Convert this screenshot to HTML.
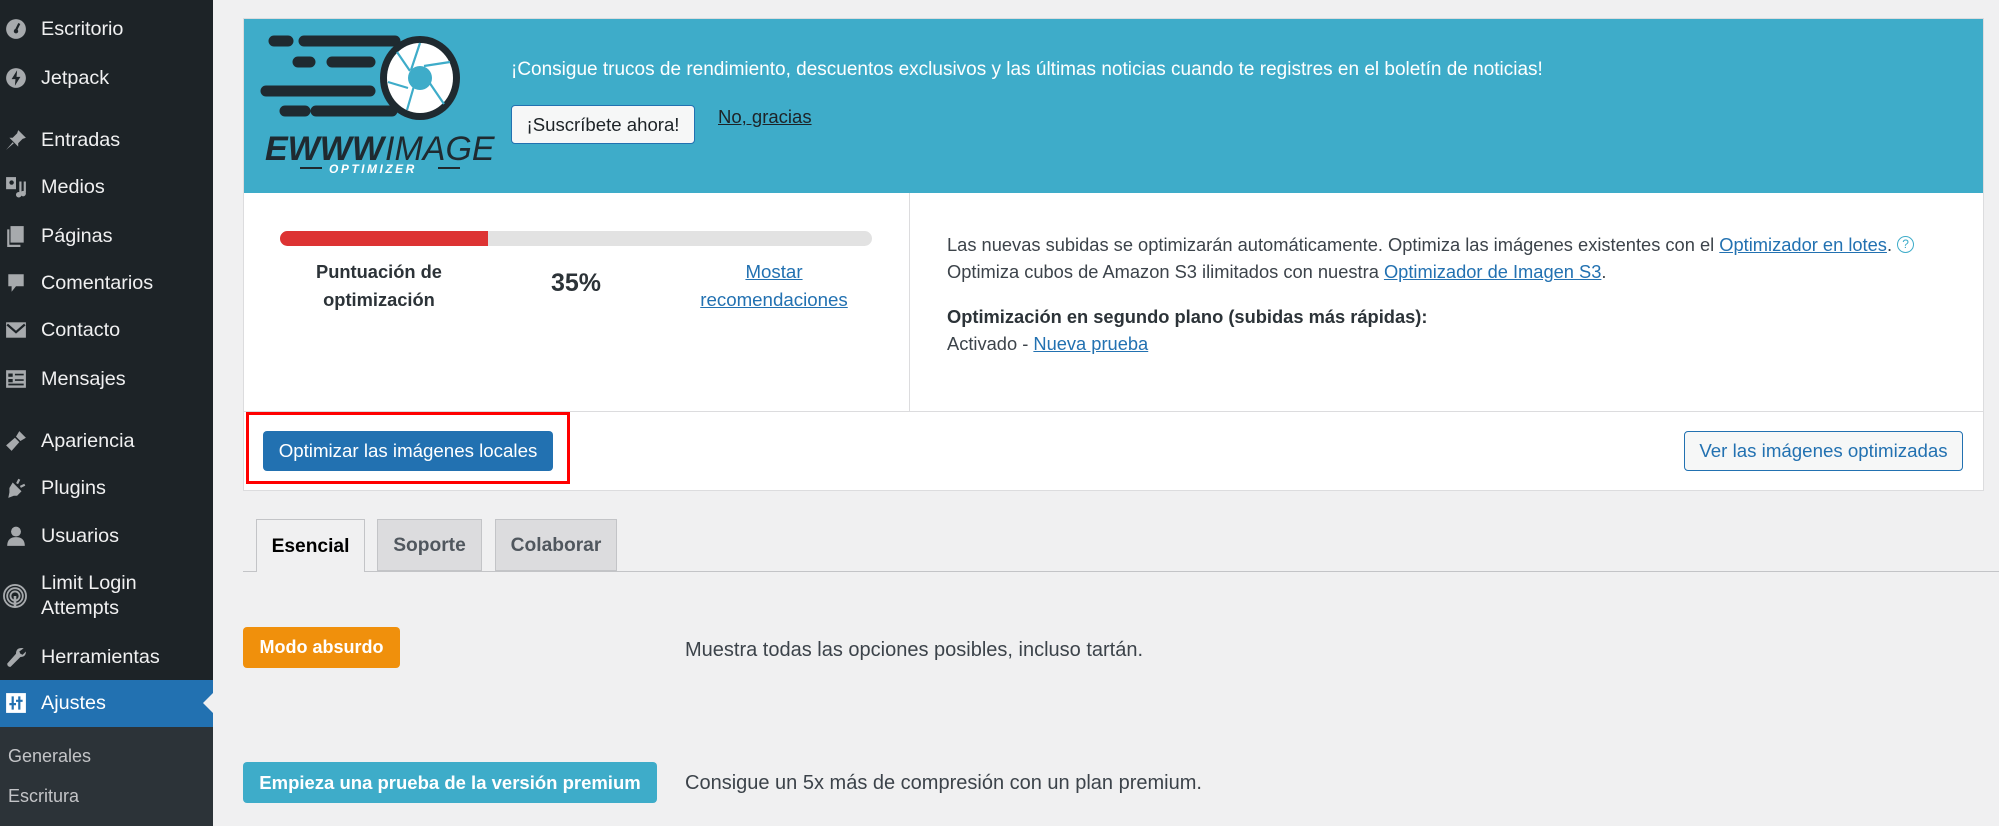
<!DOCTYPE html>
<html><head><meta charset="utf-8"><style>
*{box-sizing:border-box;margin:0;padding:0}
body{width:1999px;height:826px;overflow:hidden;background:#f0f0f1;font-family:"Liberation Sans",sans-serif;color:#3c434a;position:relative}
.a{position:absolute;white-space:nowrap}
#side{position:absolute;left:0;top:0;width:213px;height:826px;background:#1d2327}
.mi{position:absolute;left:41px;color:#f0f0f1;font-size:19.8px;line-height:22px}
.ic{position:absolute;left:5px;width:22px;height:22px}
.sub{position:absolute;left:8px;color:#c3c4c7;font-size:18px}
a{color:#2271b1;text-decoration:underline}
.btn{position:absolute;border-radius:4px;font-size:18.7px;text-align:center;white-space:nowrap}
</style></head><body>
<div id="side">
  <svg class="ic" style="top:18px" viewBox="0 0 20 20"><circle cx="10" cy="10" r="9" fill="#a7aaad"/><path d="M10 11 L13 5" stroke="#1d2327" stroke-width="2"/><circle cx="10" cy="12" r="2" fill="#1d2327"/></svg>
  <div class="mi" style="top:18px">Escritorio</div>
  <svg class="ic" style="top:67px" viewBox="0 0 20 20"><circle cx="10" cy="10" r="9" fill="#a7aaad"/><path d="M11 3 L6 11 H9.5 L9 17 L14 9 H10.5 Z" fill="#1d2327"/></svg>
  <div class="mi" style="top:67px">Jetpack</div>
  <svg class="ic" style="top:129px" viewBox="0 0 20 20"><path d="M12 1 L19 8 L16 9 L12 13 L12 16 L4 8 L7 8 L11 4 Z M7 12 L1 19 L8 13Z" fill="#a7aaad"/></svg>
  <div class="mi" style="top:129px">Entradas</div>
  <svg class="ic" style="top:176px" viewBox="0 0 20 20"><rect x="1" y="1" width="9" height="11" fill="#a7aaad"/><circle cx="6" cy="6" r="2" fill="#1d2327"/><path d="M14 5 V16 M18 5 V15" stroke="#a7aaad" stroke-width="2"/><circle cx="12.5" cy="17" r="2.5" fill="#a7aaad"/><circle cx="16.5" cy="16" r="2.5" fill="#a7aaad"/></svg>
  <div class="mi" style="top:176px">Medios</div>
  <svg class="ic" style="top:225px" viewBox="0 0 20 20"><rect x="5" y="1" width="12" height="15" fill="#a7aaad"/><path d="M3 4 V19 H14" stroke="#a7aaad" stroke-width="2" fill="none"/></svg>
  <div class="mi" style="top:225px">Páginas</div>
  <svg class="ic" style="top:272px" viewBox="0 0 20 20"><path d="M3 2 H17 V13 H10 L6 18 V13 H3Z" fill="#a7aaad"/></svg>
  <div class="mi" style="top:272px">Comentarios</div>
  <svg class="ic" style="top:319px" viewBox="0 0 20 20"><rect x="1" y="3" width="18" height="14" fill="#a7aaad"/><path d="M2 5 L10 12 L18 5" stroke="#1d2327" stroke-width="2" fill="none"/></svg>
  <div class="mi" style="top:319px">Contacto</div>
  <svg class="ic" style="top:368px" viewBox="0 0 20 20"><rect x="1" y="2" width="18" height="16" fill="#a7aaad"/><rect x="3" y="5" width="4" height="3" fill="#1d2327"/><rect x="3" y="10" width="4" height="3" fill="#1d2327"/><path d="M9 6 H17 M9 11 H17 M3 15 H17" stroke="#1d2327" stroke-width="1.5"/></svg>
  <div class="mi" style="top:368px">Mensajes</div>
  <svg class="ic" style="top:430px" viewBox="0 0 20 20"><path d="M13 1 L19 7 L14 10 L10 6Z M9 7 L13 11 L6 19 L1 14Z" fill="#a7aaad"/></svg>
  <div class="mi" style="top:430px">Apariencia</div>
  <svg class="ic" style="top:477px" viewBox="0 0 20 20"><path d="M13 2 L11 6 M18 7 L14 9" stroke="#a7aaad" stroke-width="2"/><path d="M7 5 L15 13 L11 17 L8 17 L3 19 L4 14 L4 10Z" fill="#a7aaad"/></svg>
  <div class="mi" style="top:477px">Plugins</div>
  <svg class="ic" style="top:525px" viewBox="0 0 20 20"><circle cx="10" cy="6" r="4.5" fill="#a7aaad"/><path d="M2 19 Q2 11 10 11 Q18 11 18 19Z" fill="#a7aaad"/></svg>
  <div class="mi" style="top:525px">Usuarios</div>
  <svg class="ic" style="top:583px;width:26px;height:26px;left:2px" viewBox="0 0 20 20"><g stroke="#a7aaad" stroke-width="1.4" fill="none"><circle cx="10" cy="10" r="8.5"/><circle cx="10" cy="10" r="6"/><circle cx="10" cy="10" r="3.5"/></g><path d="M10 10 V19" stroke="#a7aaad" stroke-width="2"/></svg>
  <div class="mi" style="top:572px">Limit Login</div>
  <div class="mi" style="top:597px">Attempts</div>
  <svg class="ic" style="top:646px" viewBox="0 0 20 20"><path d="M17 2 L13 5 L14 7 L16 8 L19 5 Q19 10 14 10 L5 19 Q2 19 2 16 L10 7 Q10 1 17 2Z" fill="#a7aaad"/></svg>
  <div class="mi" style="top:646px">Herramientas</div>
  <div style="position:absolute;left:0;top:680px;width:213px;height:47px;background:#2271b1"></div>
  <div style="position:absolute;left:203px;top:693px;width:0;height:0;border-top:10px solid transparent;border-bottom:10px solid transparent;border-right:10px solid #f0f0f1"></div>
  <svg class="ic" style="top:692px" viewBox="0 0 20 20"><rect x="1" y="1" width="18" height="18" fill="#fff"/><path d="M7 4 V16 M13 4 V16" stroke="#2271b1" stroke-width="2"/><path d="M4 11 H10 M10 8 H16" stroke="#2271b1" stroke-width="2"/></svg>
  <div class="mi" style="top:692px;color:#fff">Ajustes</div>
  <div style="position:absolute;left:0;top:727px;width:213px;height:99px;background:#2c3338"></div>
  <div class="sub" style="top:746px">Generales</div>
  <div class="sub" style="top:786px">Escritura</div>
</div>

<div style="position:absolute;left:243px;top:18px;width:1741px;height:473px;background:#fff;border:1px solid #dcdcde"></div>
<div style="position:absolute;left:244px;top:19px;width:1739px;height:174px;background:#3eacc9"></div>

<svg style="position:absolute;left:255px;top:30px" width="250" height="150" viewBox="255 30 250 150">
  <g stroke="#1f2a30" stroke-linecap="round" stroke-width="11">
    <path d="M274 41 H288 M304 41 H395"/>
    <path d="M298 62 H310 M332 62 H370"/>
    <path d="M266 91 H370"/>
    <path d="M285 111 H305 M316 111 H392"/>
  </g>
  <ellipse cx="420" cy="78" rx="40" ry="42" fill="#1f2a30"/>
  <ellipse cx="420" cy="78" rx="33" ry="35" fill="#fff"/>
  <g stroke="#3eacc9" stroke-width="2.2" fill="none">
    <path d="M420 43 L411 70 M450 62 L424 66 M444 104 L429 82 M407 110 L414 86 M388 82 L408 88 M397 52 L410 71"/>
  </g>
  <circle cx="420" cy="78" r="12" fill="#3eacc9"/>
  <text x="265" y="160" font-family="Liberation Sans" font-weight="bold" font-style="italic" font-size="34" fill="#1f2a30">EWWW</text>
  <text x="385" y="160" font-family="Liberation Sans" font-style="italic" font-size="34" fill="#1f2a30">IMAGE</text>
  <path d="M300 168 H322 M438 168 H460" stroke="#1f2a30" stroke-width="2"/>
  <text x="329" y="173" font-family="Liberation Sans" font-weight="bold" font-style="italic" font-size="12" letter-spacing="2.5" fill="#fff">OPTIMIZER</text>
</svg>

<div class="a" style="left:511px;top:59px;font-size:19px;color:#fff">¡Consigue trucos de rendimiento, descuentos exclusivos y las últimas noticias cuando te registres en el boletín de noticias!</div>
<div class="btn" style="left:511px;top:105px;width:184px;height:39px;background:#f6f7f7;border:1px solid #2271b1;line-height:37px;color:#1d2327;font-size:18.6px">¡Suscríbete ahora!</div>
<a class="a" style="left:718px;top:106px;font-size:18.5px;color:#1d2327">No, gracias</a>

<div style="position:absolute;left:280px;top:231px;width:592px;height:15px;background:#e2e2e2;border-radius:8px;overflow:hidden"><div style="width:208px;height:15px;background:#dd3333"></div></div>
<div class="a" style="left:279px;top:258px;width:200px;text-align:center;font-size:18.3px;font-weight:bold;line-height:28px;color:#2c3338">Puntuación de<br>optimización</div>
<div class="a" style="left:551px;top:269px;font-size:25px;font-weight:bold;color:#2c3338">35%</div>
<div class="a" style="left:674px;top:258px;width:200px;text-align:center;font-size:18.7px;line-height:28px"><a>Mostar<br>recomendaciones</a></div>

<div style="position:absolute;left:909px;top:193px;width:1px;height:218px;background:#dcdcde"></div>
<div style="position:absolute;left:244px;top:411px;width:1739px;height:1px;background:#dcdcde"></div>

<div class="a" style="left:947px;top:231px;font-size:18.3px;line-height:27px">Las nuevas subidas se optimizarán automáticamente. Optimiza las imágenes existentes con el <a>Optimizador en lotes</a>. <span style="display:inline-block;width:17px;height:17px;border:1.5px solid #3eacc9;border-radius:50%;font-size:12px;line-height:14px;text-align:center;color:#3eacc9;vertical-align:3px">?</span><br>Optimiza cubos de Amazon S3 ilimitados con nuestra <a>Optimizador de Imagen S3</a>.</div>
<div class="a" style="left:947px;top:303px;font-size:18.3px;line-height:27px"><b style="color:#2c3338">Optimización en segundo plano (subidas más rápidas):</b><br>Activado - <a>Nueva prueba</a></div>

<div style="position:absolute;left:246px;top:412px;width:324px;height:72px;border:3px solid #f00"></div>
<div class="btn" style="left:263px;top:431px;width:290px;height:40px;background:#2271b1;color:#fff;line-height:40px">Optimizar las imágenes locales</div>
<div class="btn" style="left:1684px;top:431px;width:279px;height:40px;border:1px solid #2271b1;background:#f6f7f7;color:#2271b1;line-height:38px">Ver las imágenes optimizadas</div>

<div style="position:absolute;left:243px;top:571px;width:1756px;height:1px;background:#c3c4c7"></div>
<div class="btn" style="left:256px;top:519px;width:109px;height:53px;background:#f0f0f1;border:1px solid #c3c4c7;border-bottom:none;border-radius:0;font-weight:bold;color:#000;line-height:54px;font-size:19.2px">Esencial</div>
<div class="btn" style="left:377px;top:519px;width:105px;height:52px;background:#dcdcde;border:1px solid #c3c4c7;border-radius:0;font-weight:bold;color:#50575e;line-height:52px;font-size:19.2px">Soporte</div>
<div class="btn" style="left:495px;top:519px;width:122px;height:52px;background:#dcdcde;border:1px solid #c3c4c7;border-radius:0;font-weight:bold;color:#50575e;line-height:52px;font-size:19.2px">Colaborar</div>

<div class="btn" style="left:243px;top:627px;width:157px;height:41px;background:#f0900c;color:#fff;font-weight:bold;line-height:41px;font-size:18px">Modo absurdo</div>
<div class="a" style="left:685px;top:639px;font-size:20px">Muestra todas las opciones posibles, incluso tartán.</div>
<div class="btn" style="left:243px;top:762px;width:414px;height:41px;background:#3eacc9;color:#fff;font-weight:bold;line-height:41px;font-size:18.5px">Empieza una prueba de la versión premium</div>
<div class="a" style="left:685px;top:772px;font-size:20px">Consigue un 5x más de compresión con un plan premium.</div>
</body></html>
